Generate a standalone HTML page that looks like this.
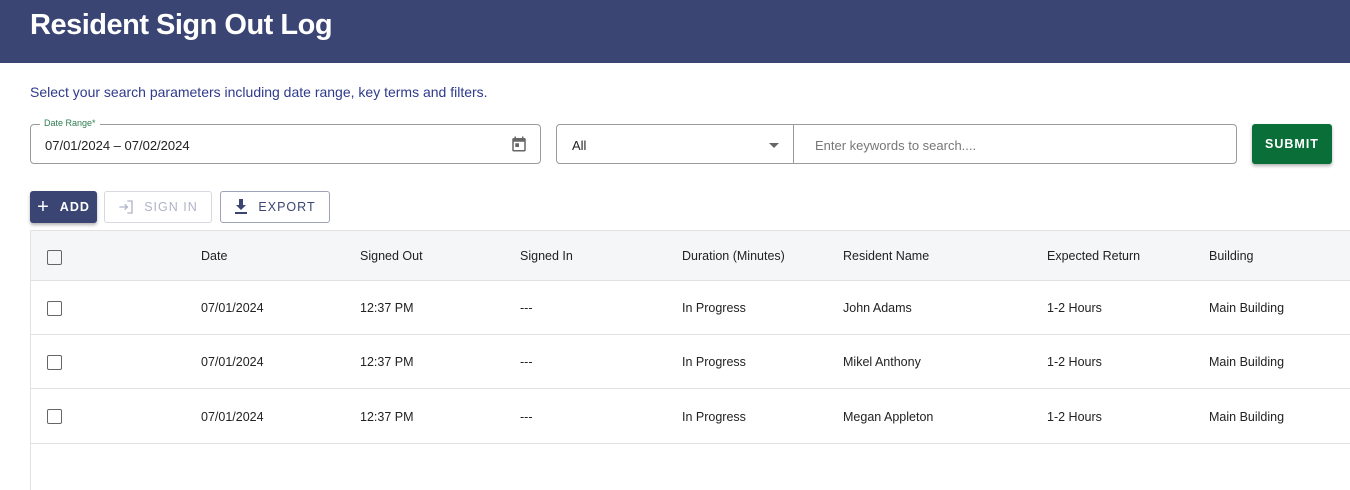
<!DOCTYPE html>
<html><head><style>
*{box-sizing:border-box;margin:0;padding:0}
body{width:1350px;height:483px;overflow:hidden;background:#fff;font-family:"Liberation Sans",sans-serif;color:#222;position:relative}
.hdr{position:absolute;left:0;top:0;width:1350px;height:63px;background:#3a4574}
.hdr h1{position:absolute;left:30px;top:9px;color:#fff;font-size:29px;font-weight:bold;letter-spacing:-0.5px}
.sub{position:absolute;left:30px;top:84px;font-size:14px;color:#2e3a8c}
.box{position:absolute;border:1px solid #9a9a9a;border-radius:4px;font-size:13px}
.lbl{position:absolute;left:9px;top:-7px;background:#fff;padding:0 4px;font-size:9px;color:#2e7d4f}
.btn{position:absolute;top:191px;height:32px;border-radius:3px;font-size:12.5px;font-weight:bold;letter-spacing:1px;display:flex;align-items:center;justify-content:center;gap:10px}
.tbl{position:absolute;left:30px;top:230px;width:1330px;height:260px;border-left:1px solid #e2e2e2}
.row{position:absolute;left:0;width:1330px;border-bottom:1px solid #e2e2e2;font-size:12.5px}
.row span{position:absolute}
.cb{position:absolute;left:16px;width:15px;height:15px;border:1.5px solid #666;border-radius:2px}
</style></head><body>
<div class="hdr"><h1>Resident Sign Out Log</h1></div>
<div class="sub">Select your search parameters including date range, key terms and filters.</div>
<div class="box" style="left:30px;top:124px;width:511px;height:40px">
<div class="lbl">Date Range*</div>
<div style="position:absolute;left:14px;top:13px">07/01/2024 – 07/02/2024</div>
<svg style="position:absolute;left:479px;top:10px" width="18" height="18" viewBox="0 0 24 24"><path fill="#666" d="M19 4h-1V2h-2v2H8V2H6v2H5a2 2 0 0 0-2 2v14a2 2 0 0 0 2 2h14a2 2 0 0 0 2-2V6a2 2 0 0 0-2-2zm0 16H5V9h14zM7 11h5v5H7z"/></svg>
</div>
<div class="box" style="left:556px;top:124px;width:681px;height:40px">
<div style="position:absolute;left:15px;top:13px">All</div>
<div style="position:absolute;left:212px;top:18px;border-left:5px solid transparent;border-right:5px solid transparent;border-top:5px solid #666"></div>
<div style="position:absolute;left:236px;top:0;height:38px;border-left:1px solid #9a9a9a"></div>
<div style="position:absolute;left:258px;top:13px;color:#777">Enter keywords to search....</div>
</div>
<div style="position:absolute;left:1252px;top:124px;width:80px;height:40px;background:#0a6e38;border-radius:3px;box-shadow:0 2px 3px rgba(0,0,0,.3);color:#fff;font-size:12.5px;font-weight:bold;letter-spacing:1px;display:flex;align-items:center;justify-content:center">SUBMIT</div>
<div class="btn" style="left:30px;width:67px;background:#3a4574;color:#fff;box-shadow:0 2px 3px rgba(0,0,0,.3)"><span style="font-size:20px;font-weight:normal">+</span>ADD</div>
<div class="btn" style="left:104px;width:108px;border:1px solid #d8d8e0;color:#b0b3c6;font-weight:normal"><svg width="16" height="16" viewBox="0 0 24 24"><path fill="none" stroke="#b0b3c6" stroke-width="2" d="M2 12h12M10 8l4 4-4 4M14 3h7v18h-7"/></svg>SIGN IN</div>
<div class="btn" style="left:220px;width:110px;border:1px solid #9fa3b8;color:#3a4574;font-weight:normal"><svg width="14" height="16" viewBox="0 0 14 16"><path fill="#3a4574" d="M5 0h4v6h3l-5 5-5-5h3zM1 13h12v2H1z"/></svg>EXPORT</div>
<div class="tbl">
<div class="row" style="top:0;height:51px;background:#f5f6f8;border-top:1px solid #e2e2e2"><div class="cb" style="top:19px"></div>
<span style="left:170px;top:18px">Date</span><span style="left:329px;top:18px">Signed Out</span><span style="left:489px;top:18px">Signed In</span><span style="left:651px;top:18px">Duration (Minutes)</span><span style="left:812px;top:18px">Resident Name</span><span style="left:1016px;top:18px">Expected Return</span><span style="left:1178px;top:18px">Building</span></div>
<div class="row" style="top:51px;height:54px"><div class="cb" style="top:20px"></div><span style="left:170px;top:20px">07/01/2024</span><span style="left:329px;top:20px">12:37 PM</span><span style="left:489px;top:20px">---</span><span style="left:651px;top:20px">In Progress</span><span style="left:812px;top:20px">John Adams</span><span style="left:1016px;top:20px">1-2 Hours</span><span style="left:1178px;top:20px">Main Building</span></div>
<div class="row" style="top:105px;height:54px"><div class="cb" style="top:20px"></div><span style="left:170px;top:20px">07/01/2024</span><span style="left:329px;top:20px">12:37 PM</span><span style="left:489px;top:20px">---</span><span style="left:651px;top:20px">In Progress</span><span style="left:812px;top:20px">Mikel Anthony</span><span style="left:1016px;top:20px">1-2 Hours</span><span style="left:1178px;top:20px">Main Building</span></div>
<div class="row" style="top:159px;height:55px"><div class="cb" style="top:20px"></div><span style="left:170px;top:21px">07/01/2024</span><span style="left:329px;top:21px">12:37 PM</span><span style="left:489px;top:21px">---</span><span style="left:651px;top:21px">In Progress</span><span style="left:812px;top:21px">Megan Appleton</span><span style="left:1016px;top:21px">1-2 Hours</span><span style="left:1178px;top:21px">Main Building</span></div>
</div>
</body></html>
